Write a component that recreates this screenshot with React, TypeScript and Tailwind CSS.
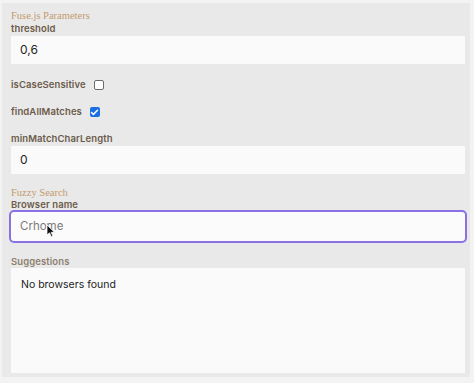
import { Check } from "lucide-react";

const serif = { fontFamily: '"Liberation Serif", "DejaVu Serif", serif' };

function Label({ text, tone = "text-[#6c5b49]" }: { text: string; tone?: string }) {
  return (
    <div className={`h-[12px] text-[9.5px] leading-[12px] font-semibold tracking-[0.1px] ${tone}`}>{text}</div>
  );
}

function Heading({ text }: { text: string }) {
  return (
    <div className="h-[14px] text-[10.5px] leading-[14px] text-[#c49b6e]" style={serif}>
      {text}
    </div>
  );
}

function Field({ value }: { value: string }) {
  return (
    <div className="mt-[1px] h-[28px] w-[454px] bg-[#fafafa] flex items-center pl-[9px] text-[12px] text-[#1f1f1f]">
      {value}
    </div>
  );
}

function Toggle({ label, checked }: { label: string; checked: boolean }) {
  return (
    <div className="h-[14px] flex items-center gap-[8px]">
      <span className="text-[9.5px] leading-[12px] font-semibold tracking-[0.1px] text-[#6c5b49]">{label}</span>
      {checked ? (
        <span className="w-[10px] h-[10px] rounded-[2px] bg-[#1b6fe3] flex items-center justify-center">
          <Check size={9} strokeWidth={4} color="#ffffff" />
        </span>
      ) : (
        <span className="w-[10px] h-[10px] rounded-[2px] border border-[#6d6d6d] bg-white" />
      )}
    </div>
  );
}

export default function App() {
  return (
    <div
      className="w-[474px] h-[383px] bg-[#f3f3f3] pt-[3px] pl-[2px]"
      style={{ fontFamily: 'Inter, "Noto Sans", sans-serif' }}
    >
      <div className="w-[468px] h-[374px] bg-[#e9e9e9] pl-[9px] pt-[6px] flex flex-col">
        <Heading text="Fuse.js Parameters" />
        <Label text="threshold" />
        <Field value="0,6" />

        <div className="mt-[14px]">
          <Toggle label="isCaseSensitive" checked={false} />
        </div>
        <div className="mt-[13px]">
          <Toggle label="findAllMatches" checked={true} />
        </div>

        <div className="mt-[14px]">
          <Label text="minMatchCharLength" />
        </div>
        <Field value="0" />

        <div className="mt-[12px]">
          <Heading text="Fuzzy Search" />
        </div>
        <div className="h-[9px] text-[9.5px] leading-[9px] font-semibold tracking-[0.1px] text-[#6c5b49]">Browser name</div>
        <div className="relative mt-[3px] h-[29px] w-[454px] bg-[#fbfbfb] rounded-[3px] ring-2 ring-[#8c71e2] flex items-center pl-[9px] text-[11.5px] text-[#7c7c7c]">
          Crhome
          <svg
            className="absolute left-[35px] top-[12px]"
            width="10"
            height="14"
            viewBox="0 0 10 14"
          >
            <path
              d="M1 1 L1 11 L3.5 8.8 L5.3 12.8 L6.9 12.1 L5.2 8.3 L8.5 8.3 Z"
              fill="#111111"
              stroke="#ffffff"
              strokeWidth="0.8"
              strokeLinejoin="round"
            />
          </svg>
        </div>

        <div className="mt-[15px]">
          <Label text="Suggestions" tone="text-[#8d7f70]" />
        </div>
        <div className="h-[105px] w-[454px] bg-[#fafafa] pl-[10px] pt-[10px] text-[10.5px] leading-[14px] text-[#1c1c1c]">
          No browsers found
        </div>
      </div>
    </div>
  );
}
